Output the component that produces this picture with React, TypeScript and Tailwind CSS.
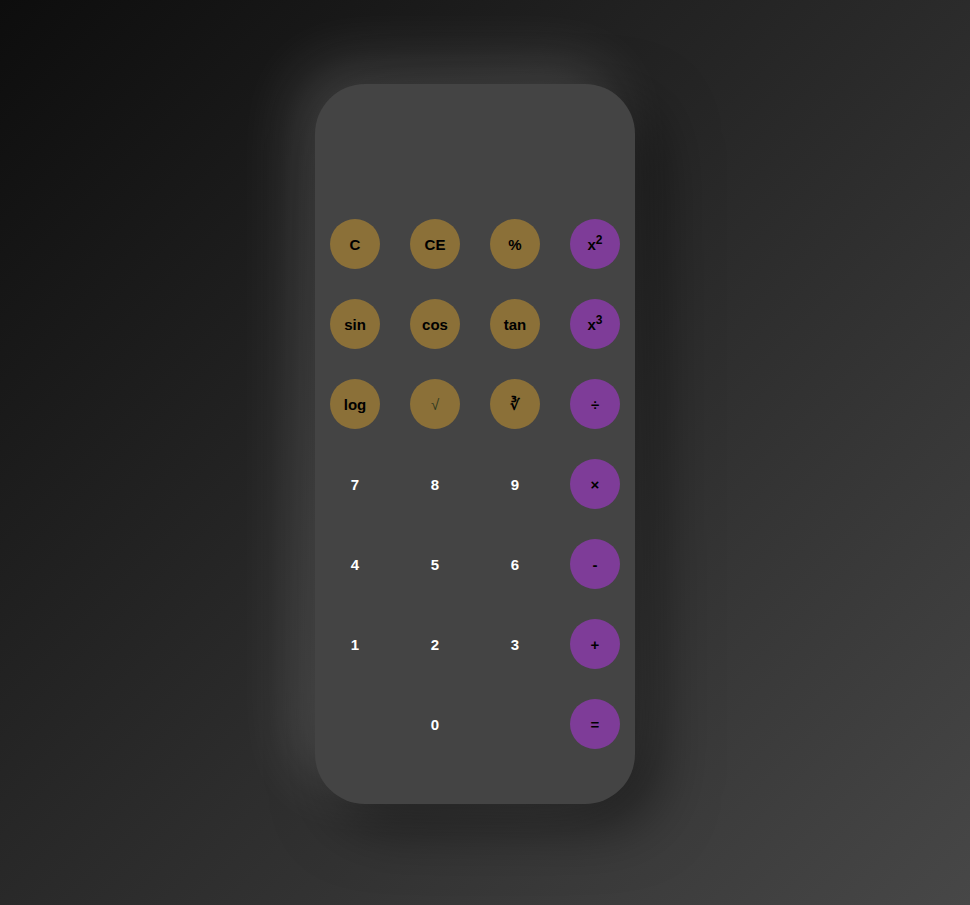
import React from "react";

type Btn = { label: React.ReactNode; kind: "fn" | "op" | "num" | "empty" };

const Sup = ({ n }: { n: string }) => (
  <sup className="text-[12px] relative -top-[6px] align-baseline">{n}</sup>
);

const rows: Btn[][] = [
  [
    { label: "C", kind: "fn" },
    { label: "CE", kind: "fn" },
    { label: "%", kind: "fn" },
    { label: <span>x<Sup n="2" /></span>, kind: "op" },
  ],
  [
    { label: "sin", kind: "fn" },
    { label: "cos", kind: "fn" },
    { label: "tan", kind: "fn" },
    { label: <span>x<Sup n="3" /></span>, kind: "op" },
  ],
  [
    { label: "log", kind: "fn" },
    { label: <span className="font-normal text-[#2f3a20]">√</span>, kind: "fn" },
    { label: "∛", kind: "fn" },
    { label: "÷", kind: "op" },
  ],
  [
    { label: "7", kind: "num" },
    { label: "8", kind: "num" },
    { label: "9", kind: "num" },
    { label: "×", kind: "op" },
  ],
  [
    { label: "4", kind: "num" },
    { label: "5", kind: "num" },
    { label: "6", kind: "num" },
    { label: "-", kind: "op" },
  ],
  [
    { label: "1", kind: "num" },
    { label: "2", kind: "num" },
    { label: "3", kind: "num" },
    { label: "+", kind: "op" },
  ],
  [
    { label: "", kind: "empty" },
    { label: "0", kind: "num" },
    { label: "", kind: "empty" },
    { label: "=", kind: "op" },
  ],
];

function Button({ b }: { b: Btn }) {
  if (b.kind === "empty") return <div className="w-[50px] h-[50px]" />;
  const cls =
    b.kind === "fn"
      ? "bg-[#8b7038] text-black"
      : b.kind === "op"
      ? "bg-[#7e3c98] text-black"
      : "bg-transparent text-white";
  return (
    <button
      className={`w-[50px] h-[50px] rounded-full flex items-center justify-center font-bold text-[15px] leading-none ${cls}`}
      style={{ fontFamily: '"Liberation Sans", Arial, sans-serif' }}
    >
      {b.label}
    </button>
  );
}

export default function App() {
  return (
    <div
      className="w-full h-[905px] flex items-start justify-start bg-[linear-gradient(135deg,#0d0d0d,#474747)]"
      style={{ fontFamily: '"Liberation Sans", Arial, sans-serif' }}
    >
      <div className="ml-[315px] mt-[84px] w-[320px] h-[720px] rounded-[50px] bg-[#444444] shadow-[-20px_-20px_60px_rgba(255,255,255,0.16),20px_20px_60px_rgba(0,0,0,0.5)] flex flex-col">
        <div className="h-[135px]" />
        <div className="grid grid-cols-4 gap-x-[30px] gap-y-[30px] px-[15px]">
          {rows.flat().map((b, i) => (
            <Button key={i} b={b} />
          ))}
        </div>
      </div>
    </div>
  );
}
